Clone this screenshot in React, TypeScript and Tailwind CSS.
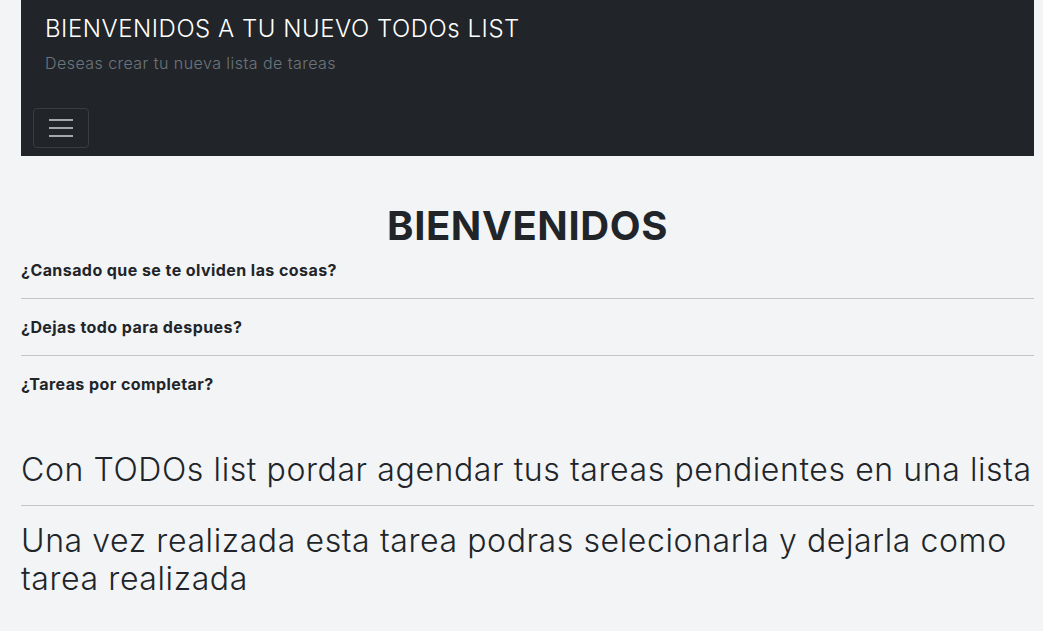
import React from 'react';

const questions = [
  '¿Cansado que se te olviden las cosas?',
  '¿Dejas todo para despues?',
  '¿Tareas por completar?',
];

export default function App() {
  return (
    <div className="min-h-screen bg-[#f3f4f6] text-[#212529]" style={{ fontFamily: 'Inter, "Open Sans", sans-serif' }}>
      <div className="ml-[21px] w-[1013px]">
        {/* Header */}
        <header className="h-[156px] bg-[#212529] px-3 pt-[14px]">
          <div className="px-3">
            <h1 className="text-[24px] leading-[29px] font-light tracking-[0.53px] text-white">BIENVENIDOS A TU NUEVO TODOs LIST</h1>
            <p className="mt-[9px] text-[16px] leading-[22px] font-light tracking-[0.45px] text-[#6c757d]">Deseas crear tu nueva lista de tareas</p>
          </div>
          <button type="button" className="mt-[34px] flex h-[40px] w-[56px] flex-col items-center justify-center gap-[6px] rounded border border-[#3a3d41]">
            <span className="block h-[2px] w-[24px] bg-[#a5a7a9]" />
            <span className="block h-[2px] w-[24px] bg-[#a5a7a9]" />
            <span className="block h-[2px] w-[24px] bg-[#a5a7a9]" />
          </button>
        </header>

        {/* Main */}
        <main>
          <h2 className="mt-[46px] text-center text-[40px] leading-[48px] font-bold tracking-[0.6px]">BIENVENIDOS</h2>
          <div className="mt-[9px]">
            {questions.map((q, i) => (
              <div key={q}>
                <p className="text-[16px] leading-[22px] font-bold tracking-[0.43px]">{q}</p>
                {i < questions.length - 1 && <hr className="my-[17px] border-t border-[#c4c5c7]" />}
              </div>
            ))}
          </div>
          <p className="mt-[56px] text-[32px] leading-[38px] font-light tracking-[0.6px]">Con TODOs list pordar agendar tus tareas pendientes en una lista</p>
          <hr className="my-[16px] border-t border-[#c4c5c7]" />
          <p className="text-[32px] leading-[38px] font-light tracking-[0.6px]">Una vez realizada esta tarea podras selecionarla y dejarla como tarea realizada</p>
        </main>
      </div>
    </div>
  );
}
